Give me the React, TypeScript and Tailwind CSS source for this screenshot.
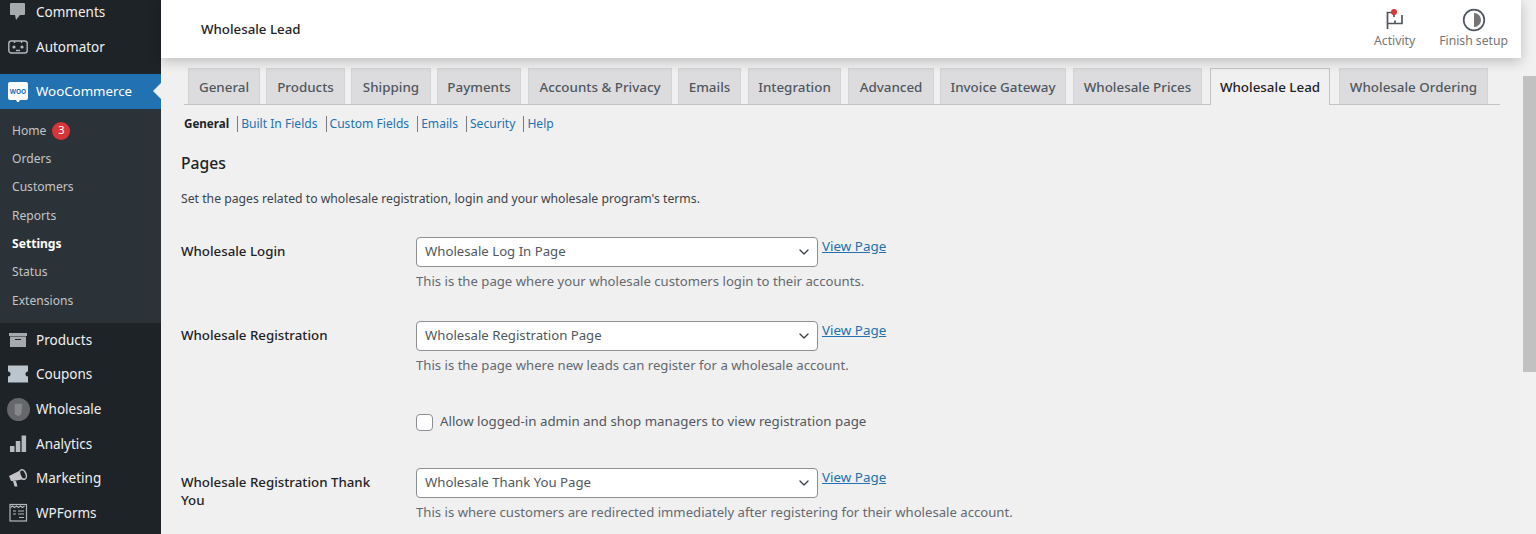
import React from 'react';
import { ChevronDown } from 'lucide-react';

const font = { fontFamily: '"Noto Sans", "Open Sans", sans-serif' };

const CommentsIcon = () => (
  <svg viewBox="0 0 20 20" className="h-[20px] w-[20px] text-[#a7aaad]" fill="currentColor">
    <path d="M3 1h13a1 1 0 0 1 1 1v10a1 1 0 0 1-1 1h-4l-4 5-1-5H3a1 1 0 0 1-1-1V2a1 1 0 0 1 1-1z" />
  </svg>
);

const AutomatorIcon = () => (
  <svg viewBox="0 0 20 20" className="h-[20px] w-[20px] text-[#b4b7ba]" fill="none" stroke="currentColor" strokeWidth="1.4">
    <rect x="0.8" y="4" width="18.4" height="12" rx="2.5" />
    <path d="M6.5 4v2M13.5 4v2" />
    <circle cx="6" cy="10" r="1.6" fill="currentColor" stroke="none" />
    <circle cx="14" cy="10" r="1.6" fill="currentColor" stroke="none" />
    <path d="M8 13.5h4" />
  </svg>
);

const WooIcon = () => (
  <svg viewBox="0 0 20 20" className="h-[20px] w-[20px]">
    <path d="M2 0h16a2 2 0 0 1 2 2v14a2 2 0 0 1-2 2h-6l-2 3-2-3H2a2 2 0 0 1-2-2V2a2 2 0 0 1 2-2z" fill="#fff" />
    <text x="10" y="11.5" textAnchor="middle" fontSize="6.5" fontWeight="700" fill="#2271b1" fontFamily="Noto Sans, sans-serif">WOO</text>
  </svg>
);

const ProductsIcon = () => (
  <svg viewBox="0 0 20 20" className="h-[20px] w-[20px] text-[#a7aaad]" fill="currentColor">
    <path d="M1 3h18v3H1z" />
    <path fillRule="evenodd" d="M2 6.5h16V17H2zm5 2.5v1h6V9z" />
  </svg>
);

const CouponsIcon = () => (
  <svg viewBox="0 0 22 20" className="h-[20px] w-[22px] text-[#bcc5cc]" fill="currentColor">
    <path d="M1 1.5h20v6a2.5 2.5 0 0 0 0 5v6H1v-6a2.5 2.5 0 0 0 0-5z" />
  </svg>
);

const WholesaleIcon = () => (
  <svg viewBox="0 0 24 24" className="h-[23px] w-[23px]">
    <circle cx="12" cy="12" r="12" fill="#65676a" />
    <path d="M8 6h8l-1 11-3 2-4-2z" fill="#85878a" />
  </svg>
);

const AnalyticsIcon = () => (
  <svg viewBox="0 0 20 20" className="h-[20px] w-[20px] text-[#b8bbbe]" fill="currentColor">
    <path d="M2 12h4.5v6H2zM7.8 7h4.5v11H7.8zM13.6 1.5h4.5V18h-4.5z" />
  </svg>
);

const MarketingIcon = () => (
  <svg viewBox="0 0 20 20" className="h-[20px] w-[20px] text-[#c3c4c7]" fill="currentColor">
    <path d="M1 8l12-6 4 9-12 2H3z" />
    <path d="M5 13h3l1.5 5.5H6.5z" />
    <ellipse cx="15" cy="6.5" rx="3" ry="5" transform="rotate(-22 15 6.5)" fill="#1d2327" stroke="currentColor" strokeWidth="1.5" />
  </svg>
);

const WPFormsIcon = () => (
  <svg viewBox="0 0 20 20" className="h-[20px] w-[20px] text-[#b4b7ba]" fill="none" stroke="currentColor" strokeWidth="1.2">
    <rect x="2" y="1.5" width="16.5" height="16.5" />
    <path d="M2.5 4.5l2-1.5 2 1.5 2-1.5 2 1.5 2-1.5 2 1.5 2-1.5" />
    <path d="M5 8h3M10 8h6M5 11h3M10 11h6M11 14.5h5" />
  </svg>
);

const topItems = [
  { label: 'Comments', icon: <CommentsIcon /> },
  { label: 'Automator', icon: <AutomatorIcon /> },
];

const subItems = ['Home', 'Orders', 'Customers', 'Reports', 'Settings', 'Status', 'Extensions'];

const bottomItems = [
  { label: 'Products', icon: <ProductsIcon /> },
  { label: 'Coupons', icon: <CouponsIcon /> },
  { label: 'Wholesale', icon: <WholesaleIcon /> },
  { label: 'Analytics', icon: <AnalyticsIcon /> },
  { label: 'Marketing', icon: <MarketingIcon /> },
  { label: 'WPForms', icon: <WPFormsIcon /> },
];

const tabs = [
  { label: 'General', cls: 'w-[72px] ml-[4px]' },
  { label: 'Products', cls: 'w-[79px] ml-[6px]' },
  { label: 'Shipping', cls: 'w-[80px] ml-[6px]' },
  { label: 'Payments', cls: 'w-[84px] ml-[6px]' },
  { label: 'Accounts & Privacy', cls: 'w-[144px] ml-[7px]' },
  { label: 'Emails', cls: 'w-[63px] ml-[6px]' },
  { label: 'Integration', cls: 'w-[93px] ml-[7px]' },
  { label: 'Advanced', cls: 'w-[86px] ml-[7px]' },
  { label: 'Invoice Gateway', cls: 'w-[126px] ml-[6px]' },
  { label: 'Wholesale Prices', cls: 'w-[129px] ml-[7px]' },
  { label: 'Wholesale Lead', cls: 'w-[120px] ml-[8px]', active: true },
  { label: 'Wholesale Ordering', cls: 'w-[149px] ml-[9px]' },
];

const subNav = ['Built In Fields', 'Custom Fields', 'Emails', 'Security', 'Help'];

const SideRow: React.FC<{ label: string; icon: React.ReactNode }> = ({ label, icon }) => (
  <div className="flex h-[34.6px] items-center text-[13.5px] text-[#f0f0f1]">
    <span className="flex w-[36px] justify-center">{icon}</span>
    <span>{label}</span>
  </div>
);

const PageSelect: React.FC<{ value: string }> = ({ value }) => (
  <div className="flex items-start">
    <div className="flex h-[30px] w-[402px] items-center justify-between rounded-[4px] border border-[#8c8f94] bg-white pl-[8px] pr-[5px] text-[13.2px] text-[#50575e]">
      <span>{value}</span>
      <ChevronDown size={16} strokeWidth={2} className="text-[#3c434a]" />
    </div>
    <a className="ml-[4px] mt-[-1px] text-[13.4px] leading-[20px] text-[#2271b1] underline">View Page</a>
  </div>
);

const Row: React.FC<{ label: string; value: string; help: string; className: string }> = ({ label, value, help, className }) => (
  <>
    <div className={`${className} pr-[30px] pt-[5px] font-medium leading-[18px] text-[#1d2327]`}>{label}</div>
    <div className={className}>
      <PageSelect value={value} />
      <p className="mt-[4px] text-[13.15px] leading-[20px] text-[#646970]">{help}</p>
    </div>
  </>
);

const App: React.FC = () => (
  <div className="flex h-[534px] w-[1536px] overflow-hidden bg-[#f0f0f1]" style={font}>
    <aside className="h-full w-[161px] shrink-0 overflow-hidden bg-[#1d2327]">
      <div className="mt-[-5px]">
        {topItems.map(item => <SideRow key={item.label} {...item} />)}
      </div>
      <div className="relative mt-[10px] flex h-[35px] items-center bg-[#2271b1] text-[13.3px] text-white">
        <span className="flex w-[36px] justify-center"><WooIcon /></span>
        <span>WooCommerce</span>
        <span className="absolute right-0 top-[9px] h-0 w-0 border-y-[8px] border-r-[8px] border-y-transparent border-r-[#f0f0f1]" />
      </div>
      <div className="flex h-[213.4px] flex-col bg-[#2c3338] pt-[7.2px]">
        {subItems.map(item => (
          <div key={item} className={`flex h-[28.4px] shrink-0 items-center pl-[12px] text-[12.1px] ${item === 'Settings' ? 'font-bold text-white' : 'text-[#c3c4c7]'}`}>
            {item}
            {item === 'Home' && (
              <span className="ml-[6px] flex h-[18px] w-[18px] items-center justify-center rounded-full bg-[#d63638] text-[11px] text-white">3</span>
            )}
          </div>
        ))}
      </div>
      <div>
        {bottomItems.map(item => <SideRow key={item.label} {...item} />)}
      </div>
    </aside>

    <div className="flex h-full min-w-0 flex-1 flex-col">
      <header className="z-10 flex h-[58px] shrink-0 items-center justify-between bg-white pl-[40px] pr-[13px] shadow-[0_3px_12px_rgba(0,0,0,0.22)]">
        <h1 className="pt-[1px] text-[13.3px] font-medium text-[#1d2327]">Wholesale Lead</h1>
        <div className="flex items-start gap-[24px] text-[12.2px] text-[#757575]">
          <div className="flex flex-col items-center">
            <span className="relative block h-[24px] w-[24px]">
              <svg viewBox="0 0 24 24" className="h-[24px] w-[24px]" fill="none" stroke="#50575e" strokeWidth="1.7">
                <path d="M4.5 21V4.5H11V9" />
                <path d="M4.5 15.5H19V7" />
                <path d="M12 15.5V12.5" />
              </svg>
              <span className="absolute left-[8px] top-[1px] h-[6px] w-[6px] rounded-full bg-[#d63638]" />
            </span>
            <span className="leading-[18px]">Activity</span>
          </div>
          <div className="flex flex-col items-center">
            <svg viewBox="0 0 24 24" className="h-[24px] w-[24px]">
              <circle cx="12" cy="12" r="10.3" fill="none" stroke="#50575e" strokeWidth="1.7" />
              <path d="M12 5a7 7 0 0 1 0 14z" fill="#757575" />
            </svg>
            <span className="leading-[18px]">Finish setup</span>
          </div>
        </div>
      </header>

      <main className="min-h-0 flex-1 overflow-hidden pl-[20px]">
        <nav className="ml-[3px] mt-[10px] flex h-[37px] w-[1316px] items-end border-b border-[#c3c4c7]">
          {tabs.map(tab => (
            <div
              key={tab.label}
              className={`flex shrink-0 items-center justify-center border border-b-0 pt-[1px] text-[13.4px] font-medium ${tab.active ? '-mb-px h-[37px] border-[#c3c4c7] bg-[#f0f0f1] text-[#1d2327]' : 'h-[36px] border-[#d3d4d6] bg-[#dcdcde] text-[#50575e]'} ${tab.cls}`}
            >
              {tab.label}
            </div>
          ))}
        </nav>

        <div className="mt-[10px] flex h-[18px] items-center pl-[3px] text-[12.1px] leading-[16px]">
          <span className="text-[11.6px] font-bold text-[#1d2327]">General</span>
          {subNav.map(item => (
            <span key={item} className="ml-[8px] border-l border-[#787c82] pl-[3px] text-[#2271b1]">{item}</span>
          ))}
        </div>

        <h2 className="mt-[18px] text-[15.7px] font-medium leading-[24px] text-[#1d2327]">Pages</h2>
        <p className="mt-[15px] text-[12.23px] leading-[18px] text-[#3c434a]">Set the pages related to wholesale registration, login and your wholesale program's terms.</p>

        <div className="mt-[29px] grid grid-cols-[235px_1fr] text-[13.3px]">
          <Row className="" label="Wholesale Login" value="Wholesale Log In Page" help="This is the page where your wholesale customers login to their accounts." />
          <Row className="mt-[30px]" label="Wholesale Registration" value="Wholesale Registration Page" help="This is the page where new leads can register for a wholesale account." />

          <div className="mt-[37px]" />
          <div className="mt-[37px] flex h-[20px] items-center gap-[7px] text-[#50575e]">
            <span className="h-[17px] w-[17px] rounded-[4px] border border-[#8c8f94] bg-white" />
            <span>Allow logged-in admin and shop managers to view registration page</span>
          </div>

          <Row className="mt-[36px]" label="Wholesale Registration Thank You" value="Wholesale Thank You Page" help="This is where customers are redirected immediately after registering for their wholesale account." />
        </div>
      </main>
    </div>

    <div className="h-full w-[15px] shrink-0 bg-[#f1f1f1] pl-[2px] pt-[76px]">
      <div className="h-[296px] w-[13px] bg-[#c1c1c1]" />
    </div>
  </div>
);

export default App;
